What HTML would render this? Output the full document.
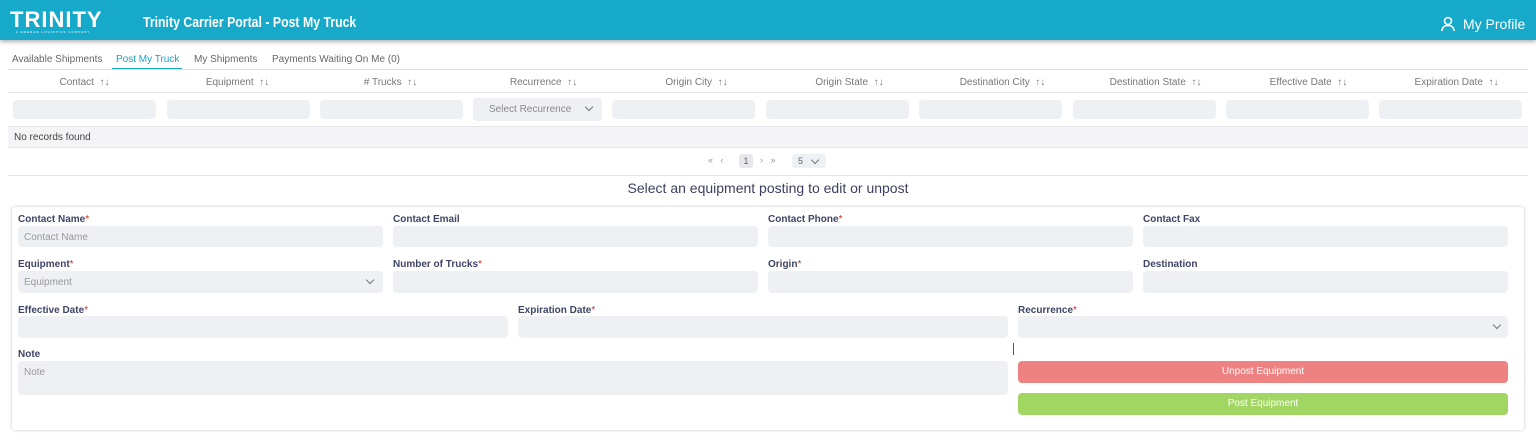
<!DOCTYPE html>
<html><head><style>
*{box-sizing:border-box;margin:0;padding:0}
body{width:1536px;height:442px;background:#fff;font-family:"Liberation Sans",sans-serif;position:relative;overflow:hidden;color:#4b4f6b}
.hdr{position:absolute;left:0;top:0;width:1536px;height:40px;background:#17a9c9;box-shadow:0 2px 4px rgba(0,0,0,.3)}
.abs{position:absolute}
.tabs{font-size:10px;color:#666}
.th{font-size:10px;color:#777;top:77px;text-align:center}
.f{position:absolute;background:#eff0f4;border-radius:4px}
.lbl{position:absolute;font-size:10px;font-weight:bold;color:#3f4366}
.lbl b{color:#e02020;font-weight:normal}
.ph{font-size:10px;color:#999;padding:6px 6px}
.chev{position:absolute;width:6px;height:6px;border-right:1px solid #777;border-bottom:1px solid #777;transform:rotate(45deg)}
</style></head><body>
<div class="hdr">
 <div class="abs" style="left:10px;top:7px;color:#fff;font-weight:bold;font-size:22px;letter-spacing:1px">TRINITY</div>
 <div class="abs" style="left:16px;top:30px;color:#fff;font-size:3px;letter-spacing:1px">A EMERGE LOGISTICS COMPANY</div>
 <div class="abs" style="left:143px;top:14px;color:#fff;font-weight:bold;font-size:15px;transform:scaleX(.82);transform-origin:left">Trinity Carrier Portal - Post My Truck</div>
 <svg class="abs" style="left:1440px;top:16px" width="16" height="16" viewBox="0 0 16 16"><circle cx="8" cy="5" r="3.5" fill="none" stroke="#fff" stroke-width="1.6"/><path d="M2 15c0-4 3-5.5 6-5.5s6 1.5 6 5.5" fill="none" stroke="#fff" stroke-width="1.6"/></svg>
 <div class="abs" style="left:1463px;top:16px;color:#fff;font-size:14px">My Profile</div>
</div>
<div class="abs tabs" style="left:12px;top:54px">Available Shipments</div>
<div class="abs tabs" style="left:116px;top:54px;color:#1aa3c4">Post My Truck</div>
<div class="abs" style="left:112px;top:68px;width:70px;height:2px;background:#1aa3c4"></div>
<div class="abs tabs" style="left:194px;top:54px">My Shipments</div>
<div class="abs tabs" style="left:272px;top:54px">Payments Waiting On Me (0)</div>
<div class="abs" style="left:8px;top:69px;width:1520px;height:1px;background:#dde"></div>
<div class="abs" style="left:8px;top:92px;width:1520px;height:1px;background:#e4e4ea"></div>
<div class="abs th" style="left:8px;width:153px">Contact &nbsp;↑↓</div>
<div class="abs th" style="left:161px;width:153px">Equipment &nbsp;↑↓</div>
<div class="abs th" style="left:314px;width:153px"># Trucks &nbsp;↑↓</div>
<div class="abs th" style="left:467px;width:153px">Recurrence &nbsp;↑↓</div>
<div class="abs th" style="left:620px;width:153px">Origin City &nbsp;↑↓</div>
<div class="abs th" style="left:773px;width:153px">Origin State &nbsp;↑↓</div>
<div class="abs th" style="left:926px;width:153px">Destination City &nbsp;↑↓</div>
<div class="abs th" style="left:1079px;width:153px">Destination State &nbsp;↑↓</div>
<div class="abs th" style="left:1232px;width:153px">Effective Date &nbsp;↑↓</div>
<div class="abs th" style="left:1385px;width:143px">Expiration Date &nbsp;↑↓</div>
<div class="f" style="left:13px;top:100px;width:143px;height:19px"></div>
<div class="f" style="left:167px;top:100px;width:143px;height:19px"></div>
<div class="f" style="left:320px;top:100px;width:143px;height:19px"></div>
<div class="f" style="left:473px;top:98px;width:129px;height:23px;font-size:10px;color:#888;padding:6px 16px">Select Recurrence<div class="chev" style="left:113px;top:6px"></div></div>
<div class="f" style="left:612px;top:100px;width:143px;height:19px"></div>
<div class="f" style="left:766px;top:100px;width:143px;height:19px"></div>
<div class="f" style="left:919px;top:100px;width:143px;height:19px"></div>
<div class="f" style="left:1073px;top:100px;width:143px;height:19px"></div>
<div class="f" style="left:1226px;top:100px;width:143px;height:19px"></div>
<div class="f" style="left:1379px;top:100px;width:143px;height:19px"></div>
<div class="abs" style="left:8px;top:126px;width:1520px;height:22px;background:#f4f4f6;border-top:1px solid #e4e4ea;border-bottom:1px solid #e4e4ea;font-size:10px;color:#444;padding:5px 6px">No records found</div>
<div class="abs" style="left:708px;top:155px;font-size:9px;color:#999">«&nbsp;&nbsp; ‹</div>
<div class="abs" style="left:739px;top:154px;width:14px;height:14px;background:#e8e8ec;border-radius:3px;font-size:9px;color:#666;text-align:center;line-height:14px">1</div>
<div class="abs" style="left:760px;top:155px;font-size:9px;color:#999">›&nbsp;&nbsp; »</div>
<div class="abs" style="left:792px;top:154px;width:34px;height:14px;background:#eff0f4;border-radius:3px;font-size:9px;color:#666;padding:2px 6px">5<div class="chev" style="left:20px;top:3px"></div></div>
<div class="abs" style="left:8px;top:175px;width:1520px;height:1px;background:#e4e4ea"></div>
<div class="abs" style="left:0;top:180px;width:1536px;text-align:center;font-size:14px;color:#3d4060">Select an equipment posting to edit or unpost</div>
<div class="abs" style="left:12px;top:207px;width:1512px;height:223px;border-radius:3px;box-shadow:0 0 3px rgba(0,0,0,.25)"></div>
<div class="lbl" style="left:18px;top:214px">Contact Name<b>*</b></div>
<div class="lbl" style="left:393px;top:214px">Contact Email</div>
<div class="lbl" style="left:768px;top:214px">Contact Phone<b>*</b></div>
<div class="lbl" style="left:1143px;top:214px">Contact Fax</div>
<div class="f ph" style="left:18px;top:226px;width:365px;height:21px">Contact Name</div>
<div class="f" style="left:393px;top:226px;width:365px;height:21px"></div>
<div class="f" style="left:768px;top:226px;width:365px;height:21px"></div>
<div class="f" style="left:1143px;top:226px;width:365px;height:21px"></div>
<div class="lbl" style="left:18px;top:259px">Equipment<b>*</b></div>
<div class="lbl" style="left:393px;top:259px">Number of Trucks<b>*</b></div>
<div class="lbl" style="left:768px;top:259px">Origin<b>*</b></div>
<div class="lbl" style="left:1143px;top:259px">Destination</div>
<div class="f ph" style="left:18px;top:271px;width:365px;height:22px">Equipment<div class="chev" style="left:349px;top:6px"></div></div>
<div class="f" style="left:393px;top:271px;width:365px;height:22px"></div>
<div class="f" style="left:768px;top:271px;width:365px;height:22px"></div>
<div class="f" style="left:1143px;top:271px;width:365px;height:22px"></div>
<div class="lbl" style="left:18px;top:305px">Effective Date<b>*</b></div>
<div class="lbl" style="left:518px;top:305px">Expiration Date<b>*</b></div>
<div class="lbl" style="left:1018px;top:305px">Recurrence<b>*</b></div>
<div class="f" style="left:18px;top:316px;width:490px;height:22px"></div>
<div class="f" style="left:518px;top:316px;width:490px;height:22px"></div>
<div class="f" style="left:1018px;top:316px;width:490px;height:22px"><div class="chev" style="left:476px;top:6px"></div></div>
<div class="lbl" style="left:18px;top:349px">Note</div>
<div class="f ph" style="left:18px;top:361px;width:990px;height:34px">Note</div>
<div class="abs" style="left:1013px;top:343px;width:1px;height:12px;background:#557"></div>
<div class="abs" style="left:1018px;top:361px;width:490px;height:22px;background:#ee8282;border-radius:4px;color:#fff;font-size:10px;text-align:center;line-height:22px">Unpost Equipment</div>
<div class="abs" style="left:1018px;top:393px;width:490px;height:22px;background:#a2d662;border-radius:4px;color:#fff;font-size:10px;text-align:center;line-height:22px">Post Equipment</div>
</body></html>
